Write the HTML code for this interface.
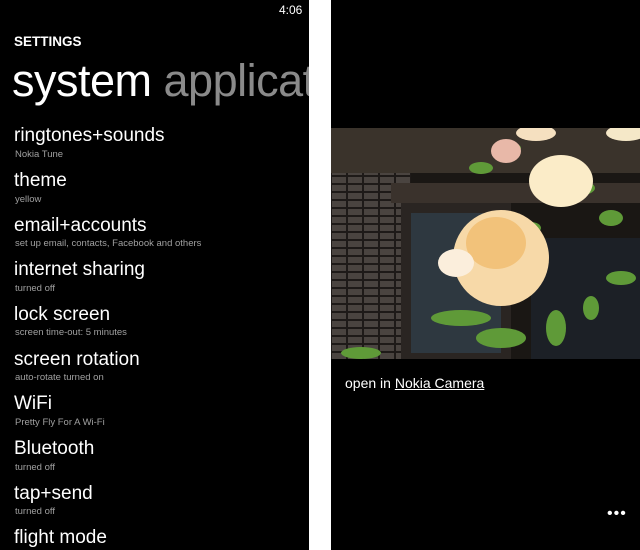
<!DOCTYPE html>
<html><head><style>
body{margin:0;width:640px;height:550px;background:#000;overflow:hidden;position:relative;font-family:"Liberation Sans",sans-serif;color:#fff}
.l{position:absolute;left:0;top:0;width:309px;height:550px;background:#000;overflow:hidden}
.gap{position:absolute;left:309px;top:0;width:22px;height:550px;background:#fff}
.r{position:absolute;left:331px;top:0;width:309px;height:550px;background:#000}
.t{position:absolute;left:14px;font-size:19px;white-space:nowrap}
.s{position:absolute;left:15px;font-size:9.5px;color:#a0a0a0;white-space:nowrap}
</style></head><body>
<div class="l">
<div style="position:absolute;left:279px;top:3px;font-size:12px">4:06</div>
<div style="position:absolute;left:14px;top:34px;font-size:13.5px;font-weight:bold">SETTINGS</div>
<div style="position:absolute;left:12px;top:55px;font-size:45px;white-space:nowrap;letter-spacing:-0.5px">system <span style="color:#8a8a8a">applications</span></div>
<div class="t" style="top:125px">ringtones+sounds</div><div class="s" style="top:149px">Nokia Tune</div>
<div class="t" style="top:170px">theme</div><div class="s" style="top:194px">yellow</div>
<div class="t" style="top:215px">email+accounts</div><div class="s" style="top:238px">set up email, contacts, Facebook and others</div>
<div class="t" style="top:259px">internet sharing</div><div class="s" style="top:283px">turned off</div>
<div class="t" style="top:304px">lock screen</div><div class="s" style="top:327px">screen time-out: 5 minutes</div>
<div class="t" style="top:349px">screen rotation</div><div class="s" style="top:372px">auto-rotate turned on</div>
<div class="t" style="top:393px">WiFi</div><div class="s" style="top:417px">Pretty Fly For A Wi-Fi</div>
<div class="t" style="top:438px">Bluetooth</div><div class="s" style="top:462px">turned off</div>
<div class="t" style="top:483px">tap+send</div><div class="s" style="top:506px">turned off</div>
<div class="t" style="top:527px">flight mode</div>
</div>
<div class="gap"></div>
<div class="r">
<svg style="position:absolute;left:0;top:128px" width="309" height="231" viewBox="0 0 309 231">
<defs><pattern id="b" width="16" height="8" patternUnits="userSpaceOnUse"><rect width="16" height="8" fill="#1e1a18"/><rect x="1" y="1" width="14" height="6" fill="#4a4440"/></pattern></defs>
<rect width="309" height="231" fill="#1a1714"/>
<rect width="309" height="45" fill="#3a332b"/>
<rect x="0" y="45" width="80" height="186" fill="url(#b)"/>
<rect x="60" y="55" width="249" height="20" fill="#3a322c"/>
<rect x="70" y="75" width="110" height="156" fill="#2a2522"/>
<rect x="80" y="85" width="90" height="140" fill="#2e3840"/>
<rect x="200" y="110" width="109" height="121" fill="#1c2026"/>
<g fill="#5f9a38">
<ellipse cx="150" cy="40" rx="12" ry="6"/><ellipse cx="180" cy="20" rx="10" ry="5"/><ellipse cx="250" cy="60" rx="14" ry="7"/>
<ellipse cx="280" cy="90" rx="12" ry="8"/><ellipse cx="130" cy="190" rx="30" ry="8"/><ellipse cx="170" cy="210" rx="25" ry="10"/>
<ellipse cx="225" cy="200" rx="10" ry="18"/><ellipse cx="290" cy="150" rx="15" ry="7"/><ellipse cx="30" cy="225" rx="20" ry="6"/>
<ellipse cx="260" cy="180" rx="8" ry="12"/><ellipse cx="200" cy="100" rx="10" ry="6"/>
</g>
<ellipse cx="170" cy="130" rx="48" ry="48" fill="#f7d9a8"/>
<ellipse cx="165" cy="115" rx="30" ry="26" fill="#f2c27a"/>
<ellipse cx="125" cy="135" rx="18" ry="14" fill="#fbeedc"/>
<ellipse cx="230" cy="53" rx="32" ry="26" fill="#fbecc8"/>
<ellipse cx="175" cy="23" rx="15" ry="12" fill="#e8b8a8"/>
<ellipse cx="205" cy="5" rx="20" ry="8" fill="#f5e0c0"/>
<ellipse cx="295" cy="5" rx="20" ry="8" fill="#f5e8c8"/>
</svg>
<div style="position:absolute;left:14px;top:375px;font-size:14px">open in <span style="text-decoration:underline">Nokia Camera</span></div>
<div style="position:absolute;left:276px;top:505px;font-size:16px;letter-spacing:1px">•••</div>
</div>
</body></html>
